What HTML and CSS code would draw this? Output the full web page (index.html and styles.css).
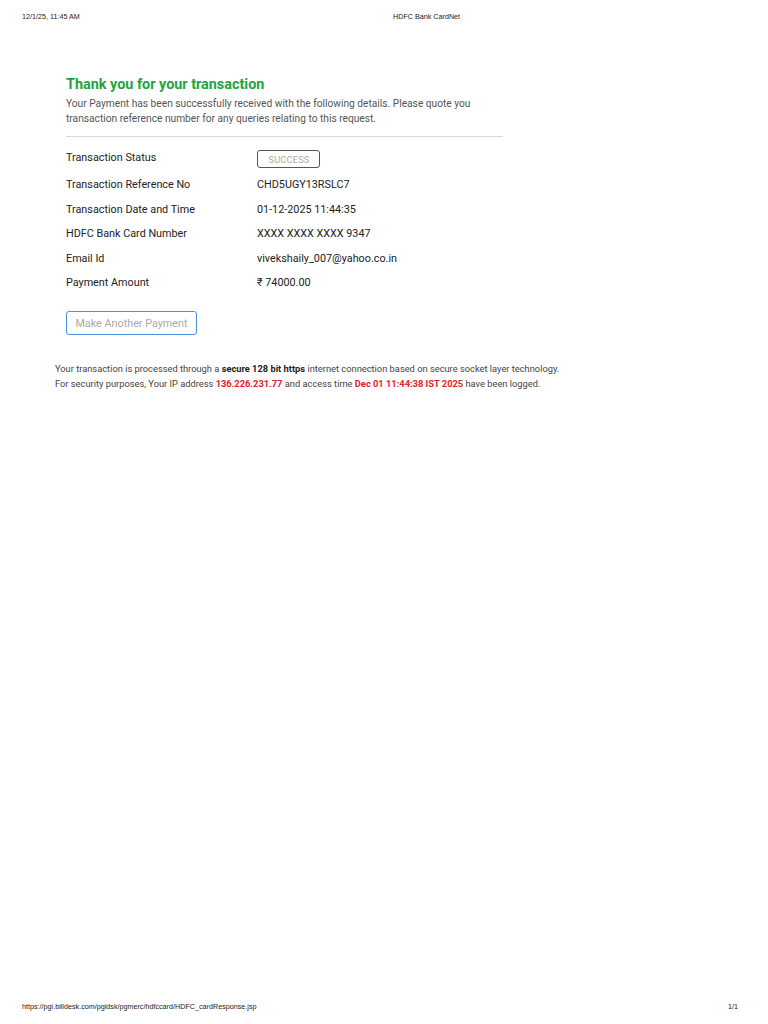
FILE: index.html
```html
<!DOCTYPE html>
<html>
<head>
<meta charset="utf-8">
<link rel="stylesheet" href="styles.css">
</head>
<body>
<div class="page">
  <header class="print-head">
    <span class="ph-date">12/1/25, 11:45 AM</span>
    <span class="ph-title">HDFC Bank CardNet</span>
    <span class="ph-spacer"></span>
  </header>

  <main class="content">
    <section class="card">
      <h1 class="title">Thank you for your transaction</h1>
      <p class="intro">Your Payment has been successfully received with the following details. Please quote you transaction reference number for any queries relating to this request.</p>
      <div class="divider"></div>
      <div class="details">
        <div class="label status-label">Transaction Status</div>
        <div class="value status-value"><span class="badge">SUCCESS</span></div>
        <div class="label">Transaction Reference No</div>
        <div class="value">CHD5UGY13RSLC7</div>
        <div class="label">Transaction Date and Time</div>
        <div class="value">01-12-2025 11:44:35</div>
        <div class="label">HDFC Bank Card Number</div>
        <div class="value">XXXX XXXX XXXX 9347</div>
        <div class="label">Email Id</div>
        <div class="value">vivekshaily_007@yahoo.co.in</div>
        <div class="label">Payment Amount</div>
        <div class="value">₹ 74000.00</div>
      </div>
      <button class="btn">Make Another Payment</button>
    </section>

    <section class="security">
      <p>Your transaction is processed through a <b>secure 128 bit https</b> internet connection based on secure socket layer technology.</p>
      <p>For security purposes, Your IP address <b class="red">136.226.231.77</b> and access time <b class="red">Dec 01 11:44:38 IST 2025</b> have been logged.</p>
    </section>
  </main>

  <footer class="print-foot">
    <span>https://pgi.billdesk.com/pgidsk/pgmerc/hdfccard/HDFC_cardResponse.jsp</span>
    <span>1/1</span>
  </footer>
</div>
</body>
</html>
```

FILE: styles.css
```css
* { box-sizing: border-box; }
html, body { margin: 0; padding: 0; background: #fff; }
body { font-family: Roboto, "Noto Sans", sans-serif; color: #222; }

.page {
  width: 768px;
  height: 1024px;
  display: flex;
  flex-direction: column;
}

.print-head, .print-foot {
  font-family: "Liberation Sans", Arial, sans-serif;
  font-size: 7.2px;
  color: #222;
  display: flex;
  justify-content: space-between;
  padding: 0 30px 0 22px;
}
.print-head { padding-top: 12px; }
.ph-date { width: 120px; }
.ph-title { margin-left: 251px; }
.ph-spacer { flex: 1; }

.content { flex: 1; padding: 0 0 0 55px; }

.card { padding: 55px 0 0 11px; width: 448px; }

.title {
  margin: 0;
  font-size: 14.4px;
  font-weight: 700;
  color: #20a53d;
  line-height: 18px;
}

.intro {
  margin: 2px 0 0;
  font-size: 10.2px;
  line-height: 15px;
  color: #555;
}

.divider {
  height: 1px;
  background: #d8d8d8;
  margin-top: 10px;
  width: 437px;
}

.details {
  display: grid;
  grid-template-columns: 191px 1fr;
  grid-auto-rows: 24.5px;
  align-items: center;
  font-size: 10.8px;
  color: #222;
  margin-top: 11px;
}
.details .status-label, .details .status-value { align-self: start; }
.status-label { padding-top: 3px; }
.status-value { padding-top: 2px; }

.badge {
  display: inline-block;
  border: 1.5px solid #555;
  border-radius: 3px;
  color: #aaa;
  font-size: 9.2px;
  letter-spacing: 0.2px;
  padding: 3px 9px 2px 10px;
  line-height: 11px;
  width: 63px;
  height: 18px;
  text-align: center;
}

.btn {
  margin-top: 16px;
  font-family: Roboto, sans-serif;
  font-size: 10.8px;
  color: #aaa;
  background: #fff;
  border: 1px solid #4a90e2;
  border-radius: 3px;
  width: 131px;
  height: 24px;
  padding: 0;
}

.security {
  margin-top: 26px;
  font-size: 9.3px;
  color: #444;
}
.security p { margin: 0; line-height: 15px; }
.security b { font-weight: 700; color: #222; }
.security b.red { color: #e8202a; }

.print-foot { padding-bottom: 13px; }
```
